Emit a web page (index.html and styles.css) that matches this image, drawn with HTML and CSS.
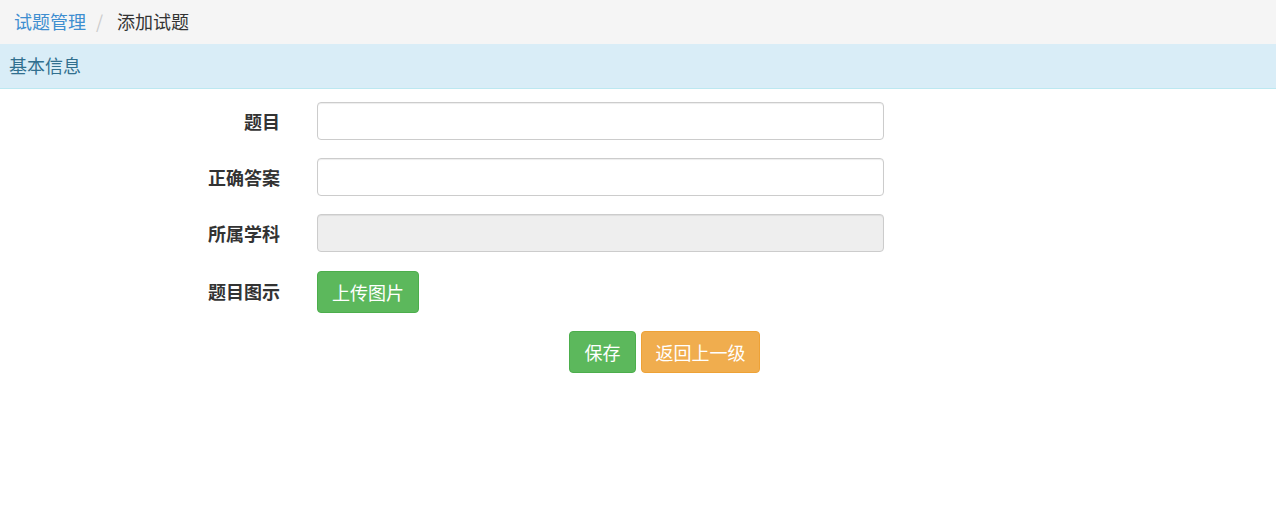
FILE: index.html
```html
<!DOCTYPE html>
<html lang="zh">
<head>
<meta charset="utf-8">
<title>添加试题</title>
<link rel="stylesheet" href="styles.css">
</head>
<body>
<ol class="breadcrumb">
  <li><a href="#">试题管理</a></li>
  <li class="sep">/</li>
  <li class="active">添加试题</li>
</ol>
<div class="panel">
  <div class="panel-heading">基本信息</div>
  <form class="form">
    <div class="row">
      <label class="label">题目</label>
      <input class="input" type="text">
    </div>
    <div class="row">
      <label class="label">正确答案</label>
      <input class="input" type="text">
    </div>
    <div class="row">
      <label class="label">所属学科</label>
      <input class="input" type="text" disabled>
    </div>
    <div class="row row-upload">
      <label class="label">题目图示</label>
      <button type="button" class="btn btn-success">上传图片</button>
    </div>
    <div class="actions">
      <button type="button" class="btn btn-success">保存</button>
      <button type="button" class="btn btn-warning">返回上一级</button>
    </div>
  </form>
</div>
</body>
</html>
```

FILE: styles.css
```css
* { box-sizing: border-box; }
html, body {
  margin: 0;
  padding: 0;
  background: #fff;
  font-family: "Microsoft YaHei", "Noto Sans CJK SC", "Noto Sans", sans-serif;
  font-size: 18px;
  color: #333;
}
.breadcrumb {
  list-style: none;
  margin: 0;
  padding: 0 15px 3px 14px;
  height: 44px;
  background: #f5f5f5;
  display: flex;
  align-items: center;
  line-height: 24px;
}
.breadcrumb li { display: block; }
.breadcrumb a { color: #3e8ed0; text-decoration: none; }
.breadcrumb .sep { color: #ccc; padding: 0 14px 0 10px; }
.breadcrumb .active { color: #333; }
.panel-heading {
  height: 45px;
  background: #d9edf7;
  color: #31708f;
  border-bottom: 1px solid #bce8f1;
  padding: 0 9px 2px;
  display: flex;
  align-items: center;
  line-height: 24px;
}
.form {
  padding-top: 13px;
  display: flex;
  flex-direction: column;
  gap: 18px;
}
.row {
  display: flex;
  align-items: center;
  gap: 37px;
}
.row-upload { margin-top: 1px; }
.row-upload .label { margin-top: -3px; }
.label {
  width: 280px;
  text-align: right;
  font-weight: bold;
  color: #333;
  line-height: 24px;
}
.input {
  width: 567px;
  height: 38px;
  border: 1px solid #ccc;
  border-radius: 4px;
  padding: 6px 12px;
  font: inherit;
  background: #fff;
  box-shadow: inset 0 1px 1px rgba(0,0,0,.075);
}
.input:disabled { background: #eee; }
.btn {
  height: 42px;
  padding: 0 14px;
  font: inherit;
  line-height: 24px;
  color: #fff;
  border: 1px solid transparent;
  border-radius: 4px;
  white-space: nowrap;
}
.btn-success { background: #5cb85c; border-color: #4cae4c; }
.btn-warning { background: #f0ad4e; border-color: #eea236; }
.actions {
  display: flex;
  gap: 5px;
  padding-left: 569px;
}
.actions .btn { padding: 0; }
.actions .btn-success { width: 67px; }
.actions .btn-warning { width: 119px; }
```
